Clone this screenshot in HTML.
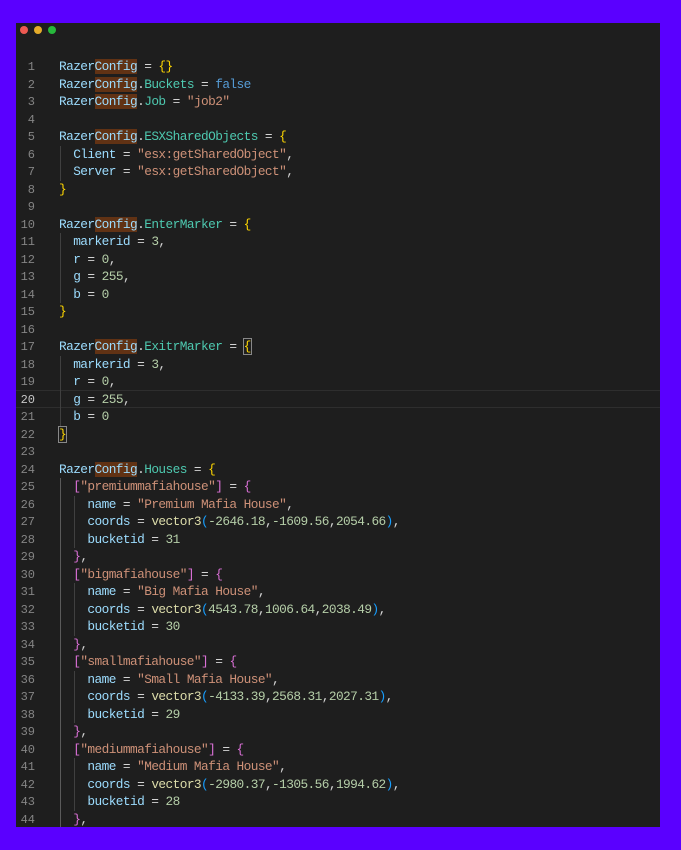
<!DOCTYPE html>
<html><head><meta charset="utf-8"><style>
html,body{margin:0;padding:0;}
body{width:681px;height:850px;background:#5a00ff;position:relative;overflow:hidden;}
.win{position:absolute;left:16px;top:23px;width:644px;height:804px;background:#1e1e1e;overflow:hidden;}
.dot{position:absolute;top:3px;width:8px;height:8px;border-radius:50%;}
.code{position:absolute;left:0;top:35px;font-family:"Liberation Mono",monospace;font-size:12.8px;letter-spacing:-0.58px;color:#d4d4d4;}
.l{height:17.5px;line-height:17.5px;white-space:pre;position:relative;}
.ln{display:inline-block;width:19px;text-align:right;color:#858585;margin-right:24px;letter-spacing:0;font-size:12px;}
.v{color:#9cdcfe}.t{color:#4ec9b0}.s{color:#ce9178}.k{color:#569cd6}.n{color:#b5cea8}
.y{color:#ffd700}.p{color:#da70d6}.b{color:#179fff}.f{color:#dcdcaa}
.h{background:#613214}
.cur{position:absolute;left:0;width:644px;height:16px;border-top:1px solid #2e2e2e;border-bottom:1px solid #2e2e2e;}
.g{position:absolute;width:1px;background:#404040;}
</style></head><body>
<div class="win">
<div class="dot" style="left:4px;background:#ee5a52"></div>
<div class="dot" style="left:18px;background:#e4ac2a"></div>
<div class="dot" style="left:32px;background:#27b83c"></div>
<div class="cur" style="top:366.5px"></div>
<div class="g" style="left:44px;top:122.5px;height:35px"></div>
<div class="g" style="left:44px;top:210px;height:70px"></div>
<div class="g" style="left:44px;top:332.5px;height:70px"></div>
<div class="g" style="left:44px;top:455px;height:350px;background:#5a5a5a"></div>
<div class="g" style="left:58px;top:472.5px;height:52.5px"></div>
<div class="g" style="left:58px;top:560px;height:52.5px"></div>
<div class="g" style="left:58px;top:647.5px;height:52.5px"></div>
<div class="g" style="left:58px;top:735px;height:52.5px"></div>
<div class="code">
<div class="l"><span class="ln">1</span><span class="v">Razer<span class="h">Config</span></span> = <span class="y">{}</span></div>
<div class="l"><span class="ln">2</span><span class="v">Razer<span class="h">Config</span></span>.<span class="t">Buckets</span> = <span class="k">false</span></div>
<div class="l"><span class="ln">3</span><span class="v">Razer<span class="h">Config</span></span>.<span class="t">Job</span> = <span class="s">"job2"</span></div>
<div class="l"><span class="ln">4</span></div>
<div class="l"><span class="ln">5</span><span class="v">Razer<span class="h">Config</span></span>.<span class="t">ESXSharedObjects</span> = <span class="y">{</span></div>
<div class="l"><span class="ln">6</span>  <span class="v">Client</span> = <span class="s">"esx:getSharedObject"</span>,</div>
<div class="l"><span class="ln">7</span>  <span class="v">Server</span> = <span class="s">"esx:getSharedObject"</span>,</div>
<div class="l"><span class="ln">8</span><span class="y">}</span></div>
<div class="l"><span class="ln">9</span></div>
<div class="l"><span class="ln">10</span><span class="v">Razer<span class="h">Config</span></span>.<span class="t">EnterMarker</span> = <span class="y">{</span></div>
<div class="l"><span class="ln">11</span>  <span class="v">markerid</span> = <span class="n">3</span>,</div>
<div class="l"><span class="ln">12</span>  <span class="v">r</span> = <span class="n">0</span>,</div>
<div class="l"><span class="ln">13</span>  <span class="v">g</span> = <span class="n">255</span>,</div>
<div class="l"><span class="ln">14</span>  <span class="v">b</span> = <span class="n">0</span></div>
<div class="l"><span class="ln">15</span><span class="y">}</span></div>
<div class="l"><span class="ln">16</span></div>
<div class="l"><span class="ln">17</span><span class="v">Razer<span class="h">Config</span></span>.<span class="t">ExitrMarker</span> = <span class="y" style="outline:1px solid #888">{</span></div>
<div class="l"><span class="ln">18</span>  <span class="v">markerid</span> = <span class="n">3</span>,</div>
<div class="l"><span class="ln">19</span>  <span class="v">r</span> = <span class="n">0</span>,</div>
<div class="l"><span class="ln" style="color:#c6c6c6">20</span>  <span class="v">g</span> = <span class="n">255</span>,</div>
<div class="l"><span class="ln">21</span>  <span class="v">b</span> = <span class="n">0</span></div>
<div class="l"><span class="ln">22</span><span class="y" style="outline:1px solid #888">}</span></div>
<div class="l"><span class="ln">23</span></div>
<div class="l"><span class="ln">24</span><span class="v">Razer<span class="h">Config</span></span>.<span class="t">Houses</span> = <span class="y">{</span></div>
<div class="l"><span class="ln">25</span>  <span class="p">[</span><span class="s">"premiummafiahouse"</span><span class="p">]</span> = <span class="p">{</span></div>
<div class="l"><span class="ln">26</span>    <span class="v">name</span> = <span class="s">"Premium Mafia House"</span>,</div>
<div class="l"><span class="ln">27</span>    <span class="v">coords</span> = <span class="f">vector3</span><span class="b">(</span><span class="n">-2646.18</span>,<span class="n">-1609.56</span>,<span class="n">2054.66</span><span class="b">)</span>,</div>
<div class="l"><span class="ln">28</span>    <span class="v">bucketid</span> = <span class="n">31</span></div>
<div class="l"><span class="ln">29</span>  <span class="p">}</span>,</div>
<div class="l"><span class="ln">30</span>  <span class="p">[</span><span class="s">"bigmafiahouse"</span><span class="p">]</span> = <span class="p">{</span></div>
<div class="l"><span class="ln">31</span>    <span class="v">name</span> = <span class="s">"Big Mafia House"</span>,</div>
<div class="l"><span class="ln">32</span>    <span class="v">coords</span> = <span class="f">vector3</span><span class="b">(</span><span class="n">4543.78</span>,<span class="n">1006.64</span>,<span class="n">2038.49</span><span class="b">)</span>,</div>
<div class="l"><span class="ln">33</span>    <span class="v">bucketid</span> = <span class="n">30</span></div>
<div class="l"><span class="ln">34</span>  <span class="p">}</span>,</div>
<div class="l"><span class="ln">35</span>  <span class="p">[</span><span class="s">"smallmafiahouse"</span><span class="p">]</span> = <span class="p">{</span></div>
<div class="l"><span class="ln">36</span>    <span class="v">name</span> = <span class="s">"Small Mafia House"</span>,</div>
<div class="l"><span class="ln">37</span>    <span class="v">coords</span> = <span class="f">vector3</span><span class="b">(</span><span class="n">-4133.39</span>,<span class="n">2568.31</span>,<span class="n">2027.31</span><span class="b">)</span>,</div>
<div class="l"><span class="ln">38</span>    <span class="v">bucketid</span> = <span class="n">29</span></div>
<div class="l"><span class="ln">39</span>  <span class="p">}</span>,</div>
<div class="l"><span class="ln">40</span>  <span class="p">[</span><span class="s">"mediummafiahouse"</span><span class="p">]</span> = <span class="p">{</span></div>
<div class="l"><span class="ln">41</span>    <span class="v">name</span> = <span class="s">"Medium Mafia House"</span>,</div>
<div class="l"><span class="ln">42</span>    <span class="v">coords</span> = <span class="f">vector3</span><span class="b">(</span><span class="n">-2980.37</span>,<span class="n">-1305.56</span>,<span class="n">1994.62</span><span class="b">)</span>,</div>
<div class="l"><span class="ln">43</span>    <span class="v">bucketid</span> = <span class="n">28</span></div>
<div class="l"><span class="ln">44</span>  <span class="p">}</span>,</div>
</div>
</div>
</body></html>
